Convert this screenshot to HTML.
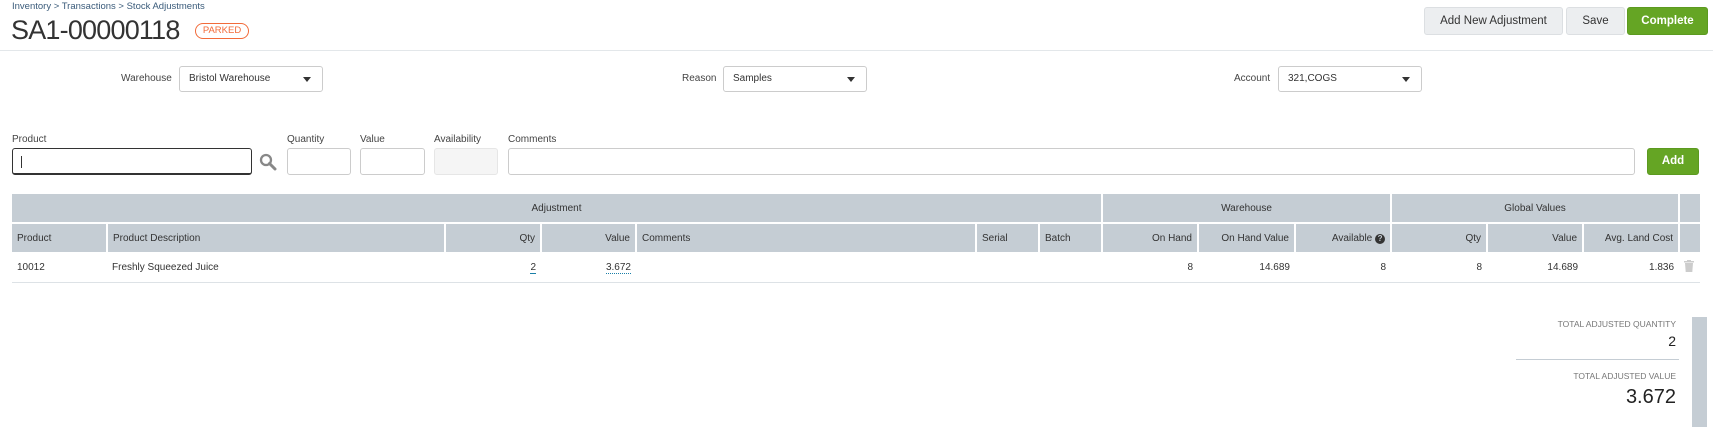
<!DOCTYPE html>
<html><head><meta charset="utf-8"><style>
*{box-sizing:border-box;margin:0;padding:0}
body{width:1713px;height:441px;background:#fff;font-family:"Liberation Sans",Arial,sans-serif;color:#333;position:relative;overflow:hidden;font-size:11px}
.a{position:absolute}
.crumb{left:12px;top:1px;font-size:9.5px;color:#3a5b7a}
.title{left:11px;top:15px;font-size:27px;color:#333;letter-spacing:-0.8px;white-space:nowrap}
.badge{left:195px;top:23px;width:54px;height:16px;border:1px solid #f26b3a;border-radius:8px;color:#f26b3a;font-size:9.5px;text-align:center;line-height:14px}
.hr{left:0;top:50px;width:1713px;height:1px;background:#e3e7ea}
.btn{top:7px;height:28px;border:1px solid #dcdfe2;background:#eceef0;border-radius:3px;font-size:11.5px;text-align:center;line-height:26px;color:#333}
.green{background:#65a524;border-color:#5c9a20;color:#fff;font-weight:bold}
.lbl{font-size:10px;color:#444}
.sel{height:26px;border:1px solid #ccc;border-radius:3px;font-size:10px;line-height:24px;padding-left:9px}
.sel:after{content:"";position:absolute;right:11px;top:10px;border-left:4px solid transparent;border-right:4px solid transparent;border-top:5px solid #333}
.inp{top:148px;height:27px;border:1px solid #ccc;border-radius:3px}
table{position:absolute;left:12px;top:194px;width:1688px;border-collapse:collapse;table-layout:fixed;font-size:10px}
th{background:#c5cdd4;font-weight:normal;color:#333;border:2px solid #fff;border-top:0;padding:0 5px;height:30px}
th.g{height:29px;text-align:center}
td{height:29px;padding:0 5px;border-bottom:1px solid #dde2e6}
.r{text-align:right}.l{text-align:left}
</style></head><body>
<div class="a crumb">Inventory &gt; Transactions &gt; Stock Adjustments</div>
<div class="a title">SA1-00000118</div>
<div class="a badge">PARKED</div>
<div class="a hr"></div>
<div class="a btn" style="left:1424px;width:139px">Add New Adjustment</div>
<div class="a btn" style="left:1566px;width:59px">Save</div>
<div class="a btn green" style="left:1627px;width:81px">Complete</div>

<div class="a lbl" style="left:121px;top:73px">Warehouse</div>
<div class="a sel" style="left:179px;top:66px;width:144px">Bristol Warehouse</div>
<div class="a lbl" style="left:682px;top:73px">Reason</div>
<div class="a sel" style="left:723px;top:66px;width:144px">Samples</div>
<div class="a lbl" style="left:1234px;top:73px">Account</div>
<div class="a sel" style="left:1278px;top:66px;width:144px">321,COGS</div>

<div class="a lbl" style="left:12px;top:134px">Product</div>
<div class="a lbl" style="left:287px;top:134px">Quantity</div>
<div class="a lbl" style="left:360px;top:134px">Value</div>
<div class="a lbl" style="left:434px;top:134px">Availability</div>
<div class="a lbl" style="left:508px;top:134px">Comments</div>
<div class="a inp" style="left:12px;width:240px;border-color:#333;border-width:1px 1px 2px 1px"><div style="position:absolute;left:8px;top:7px;width:1px;height:12px;background:#333"></div></div>
<svg class="a" style="left:259px;top:153px" width="18" height="18" viewBox="0 0 18 18"><circle cx="7" cy="7" r="5" fill="none" stroke="#888" stroke-width="2.3"/><line x1="10.5" y1="10.5" x2="16" y2="16" stroke="#888" stroke-width="3" stroke-linecap="round"/></svg>
<div class="a inp" style="left:287px;width:64px"></div>
<div class="a inp" style="left:360px;width:65px"></div>
<div class="a inp" style="left:434px;width:64px;background:#f5f5f5;border-color:#e6e6e6"></div>
<div class="a inp" style="left:508px;width:1127px"></div>
<div class="a btn green" style="left:1647px;top:148px;width:52px;height:27px;line-height:25px">Add</div>

<table>
<colgroup><col style="width:95px"><col style="width:338px"><col style="width:96px"><col style="width:95px"><col style="width:340px"><col style="width:63px"><col style="width:63px"><col style="width:96px"><col style="width:97px"><col style="width:96px"><col style="width:96px"><col style="width:96px"><col style="width:96px"><col style="width:21px"></colgroup>
<tr><th class="g" colspan="7" style="border-left:0">Adjustment</th><th class="g" colspan="3">Warehouse</th><th class="g" colspan="3">Global Values</th><th class="g" style="border-right:0"></th></tr>
<tr><th class="l" style="border-left:0">Product</th><th class="l">Product Description</th><th class="r">Qty</th><th class="r">Value</th><th class="l">Comments</th><th class="l">Serial</th><th class="l">Batch</th><th class="r">On Hand</th><th class="r">On Hand Value</th><th class="r">Available <span style="display:inline-block;width:10px;height:10px;border-radius:5px;background:#333;color:#c5cdd4;font-size:8px;line-height:10px;text-align:center;font-weight:bold">?</span></th><th class="r">Qty</th><th class="r">Value</th><th class="r">Avg. Land Cost</th><th style="border-right:0"></th></tr>
<tr><td>10012</td><td>Freshly Squeezed Juice</td><td class="r"><span style="border-bottom:1px dashed #1a7fa8">2</span></td><td class="r"><span style="border-bottom:1px dotted #1a7fa8">3.672</span></td><td></td><td></td><td></td><td class="r">8</td><td class="r">14.689</td><td class="r">8</td><td class="r">8</td><td class="r">14.689</td><td class="r">1.836</td><td><svg width="10" height="12" viewBox="0 0 10 12"><rect x="0" y="1" width="10" height="1.5" fill="#ccc"/><rect x="3" y="0" width="4" height="1.5" fill="#ccc"/><path d="M1 3h8l-0.7 9h-6.6z" fill="#ccc"/></svg></td></tr>
</table>

<div class="a" style="left:1400px;top:319px;width:276px;text-align:right;font-size:8.5px;color:#777">TOTAL ADJUSTED QUANTITY</div>
<div class="a" style="left:1400px;top:333px;width:276px;text-align:right;font-size:14px;color:#222">2</div>
<div class="a" style="left:1516px;top:359px;width:163px;height:1px;background:#c5cdd4"></div>
<div class="a" style="left:1400px;top:371px;width:276px;text-align:right;font-size:8.5px;color:#777">TOTAL ADJUSTED VALUE</div>
<div class="a" style="left:1400px;top:386px;width:276px;text-align:right;font-size:20px;color:#222">3.672</div>
<div class="a" style="left:1692px;top:317px;width:15px;height:110px;background:#c5cdd4"></div>
</body></html>
